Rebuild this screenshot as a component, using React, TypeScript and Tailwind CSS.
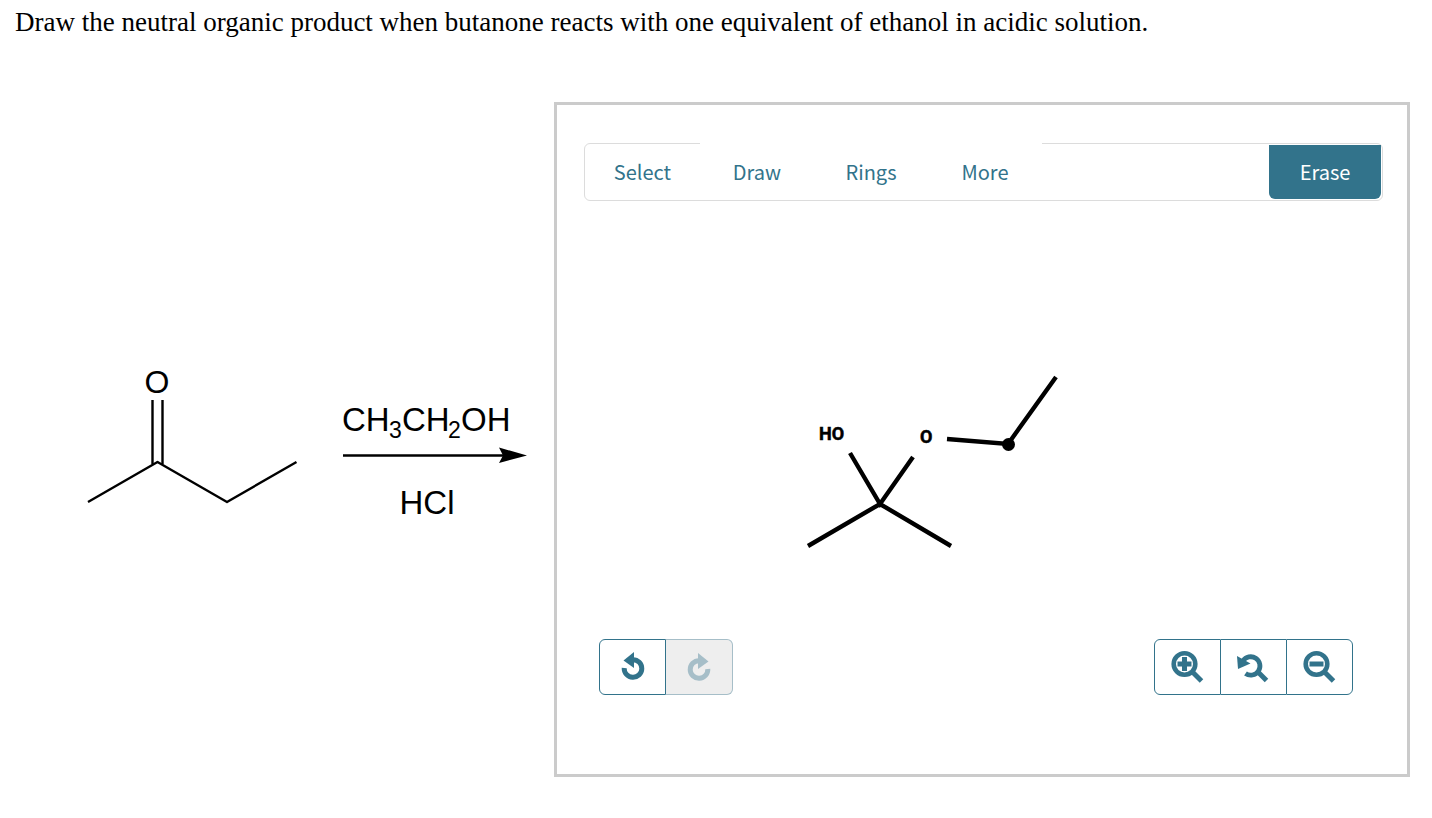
import type { ReactNode } from "react";

const TABS = ["Draw", "Rings", "More"];

// Toolbar icons, all drawn on a 36x36 grid
const Icons = {
  undo: (
    <svg width="36" height="36" viewBox="0 0 36 36" fill="none" stroke="currentColor">
      <path d="M9.200 19a8.800 8.800 0 1 0 8.800-8.300" strokeWidth="5" />
      <path d="M8.500 11.500L19 3v16z" fill="currentColor" stroke="none" />
    </svg>
  ),
  redo: (
    <svg width="36" height="36" viewBox="0 0 36 36" fill="none" stroke="currentColor">
      <path d="M26.800 20a8.800 8.800 0 1 1-8.800-8.300" strokeWidth="5" />
      <path d="M27.500 12.500L17 4v16z" fill="currentColor" stroke="none" />
    </svg>
  ),
  zoomIn: (
    <svg width="36" height="36" viewBox="0 0 36 36" fill="none" stroke="currentColor">
      <circle cx="14.500" cy="15" r="10.800" strokeWidth="4.600" />
      <path d="M22 22.500L31.500 32" strokeWidth="5" />
      <path d="M14.500 8v14M7.500 15h14" strokeWidth="5" />
    </svg>
  ),
  zoomReset: (
    <svg width="36" height="36" viewBox="0 0 36 36" fill="none" stroke="currentColor">
      <path d="M7 12a9.200 9.200 0 1 1 2.500 12.500" strokeWidth="4.800" />
      <path d="M21 22l9.500 9.500" strokeWidth="5" />
      <path d="M1 7L14.500 14.500L2 20z" fill="currentColor" stroke="none" />
    </svg>
  ),
  zoomOut: (
    <svg width="36" height="36" viewBox="0 0 36 36" fill="none" stroke="currentColor">
      <circle cx="14.500" cy="15" r="10.800" strokeWidth="4.600" />
      <path d="M22 22.500L31.500 32" strokeWidth="5" />
      <path d="M7.500 15h14" strokeWidth="5" />
    </svg>
  ),
};

export default function App() {
  return (
    <main className="bg-white text-black pb-10">
      <h1 className="px-[15px] pt-1 text-[27px] leading-9 font-['Liberation_Serif',serif]">
        Draw the neutral organic product when butanone reacts with one equivalent of ethanol in acidic solution.
      </h1>
      <div className="flex items-stretch pt-[62px] pr-[22px]">
        <div className="w-[554px] shrink-0 flex items-center">
          <Reaction />
        </div>
        <Editor />
      </div>
    </main>
  );
}

// Butanone, the reaction arrow and its reagents
function Reaction() {
  return (
    <svg
      width="554"
      height="180"
      viewBox="0 350 554 180"
      fill="none"
      stroke="black"
      strokeWidth="2.4"
      className="font-['Liberation_Sans',sans-serif]"
    >
      <path d="M88 502L157.500 462L227 502L296.500 462" strokeLinejoin="round" />
      <path d="M152.500 400V464M162.500 400V464" />
      <path d="M343 455.500H510" strokeWidth="2.600" />
      <path d="M499 447.500L527 455.500L499 463L503 455.500z" fill="black" stroke="none" />
      <g fill="black" stroke="none" fontSize="33">
        <text x="157" y="393" fontSize="32" textAnchor="middle">O</text>
        <text x="342" y="431">CH</text>
        <text x="389" y="438" fontSize="23">3</text>
        <text x="402" y="431">CH</text>
        <text x="448" y="438" fontSize="23">2</text>
        <text x="461" y="431">OH</text>
        <text x="427" y="514" textAnchor="middle">HCl</text>
      </g>
    </svg>
  );
}

function Editor() {
  return (
    <section className="flex-1 min-w-0 border-[3px] border-[#cbcbcb] pt-[38px] pb-[79px] pl-[27px] pr-6 font-['Noto_Sans_CJK_SC',sans-serif]">
      {/* Toolbar */}
      <div className="flex h-[58px] rounded-md border border-[#dcdcdc] text-xl text-[#32738b]">
        <button className="w-[115px]">Select</button>
        {TABS.map((tab) => (
          <button key={tab} className="w-[114px] -mt-px bg-white">
            {tab}
          </button>
        ))}
        <button className="ml-auto my-px mr-px w-28 rounded-b-md bg-[#32738b] text-white">Erase</button>
      </div>

      {/* Drawing area */}
      <div className="h-[438px] flex justify-center">
        <Molecule />
      </div>

      {/* History and zoom */}
      <div className="flex justify-between pl-[15px] pr-[30px] text-[#32738b]">
        <div className="flex">
          <IconButton label="Undo" className="w-[67px] rounded-l-md border border-[#32738b]">
            {Icons.undo}
          </IconButton>
          <IconButton
            label="Redo"
            disabled
            className="w-[67px] rounded-r-md border border-l-0 border-[#a6bec8] bg-[#eeeeee] text-[#a6bec8]"
          >
            {Icons.redo}
          </IconButton>
        </div>
        <div className="flex">
          <IconButton label="Zoom in" className="w-[67px] rounded-l-md border border-[#32738b]">
            {Icons.zoomIn}
          </IconButton>
          <IconButton label="Reset zoom" className="w-[65px] border-y border-[#32738b]">
            {Icons.zoomReset}
          </IconButton>
          <IconButton label="Zoom out" className="w-[67px] rounded-r-md border border-[#32738b]">
            {Icons.zoomOut}
          </IconButton>
        </div>
      </div>
    </section>
  );
}

// The hemiacetal on the canvas
function Molecule() {
  return (
    <svg
      width="400"
      height="438"
      viewBox="784 201 400 438"
      fill="none"
      stroke="black"
      strokeWidth="4.400"
      className="font-[Roboto,sans-serif]"
    >
      <path d="M808 546L880 504L951 546M850 453L880 504L913 457" />
      <path d="M947 439L1008 444L1056 377" />
      <circle cx="1008.500" cy="444.500" r="6.500" fill="black" stroke="none" />
      <g fill="black" strokeWidth="0.500" fontSize="18" fontWeight="700">
        <text x="819" y="440">HO</text>
        <text x="920" y="443">O</text>
      </g>
    </svg>
  );
}

function IconButton({
  label,
  className,
  disabled,
  children,
}: {
  label: string;
  className: string;
  disabled?: boolean;
  children: ReactNode;
}) {
  return (
    <button aria-label={label} disabled={disabled} className={`h-14 flex items-center justify-center ${className}`}>
      {children}
    </button>
  );
}
